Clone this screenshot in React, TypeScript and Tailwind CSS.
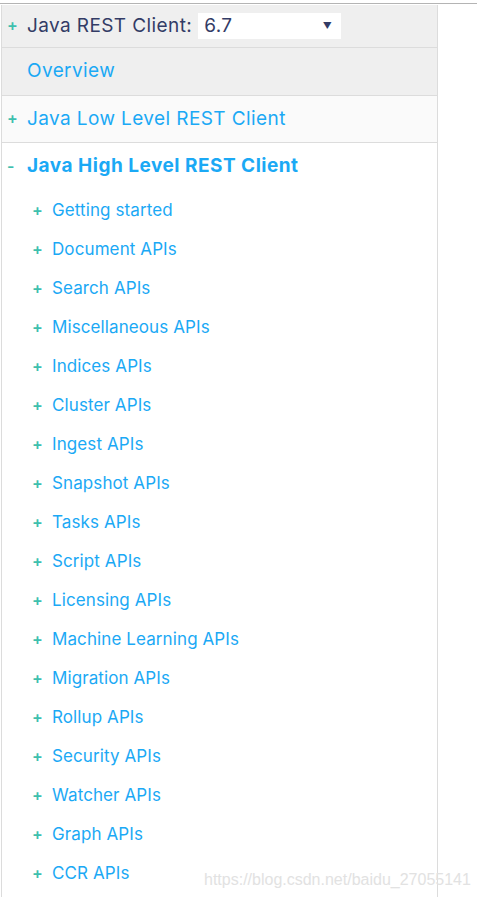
const sections = [
  'Getting started',
  'Document APIs',
  'Search APIs',
  'Miscellaneous APIs',
  'Indices APIs',
  'Cluster APIs',
  'Ingest APIs',
  'Snapshot APIs',
  'Tasks APIs',
  'Script APIs',
  'Licensing APIs',
  'Machine Learning APIs',
  'Migration APIs',
  'Rollup APIs',
  'Security APIs',
  'Watcher APIs',
  'Graph APIs',
  'CCR APIs',
];

function Toggle({ open = false }: { open?: boolean }) {
  return (
    <span className="w-[20px] shrink-0 -translate-y-px text-[16px] font-semibold leading-none text-[#3ebfae]">
      {open ? '-' : '+'}
    </span>
  );
}

export default function App() {
  return (
    <div
      className="relative min-h-screen bg-white"
      style={{ fontFamily: 'Inter, "Noto Sans", sans-serif' }}
    >
      <div className="h-[3px]" />
      <div className="h-px bg-[#b4b4b4]" />
      <div className="h-px" />

      <nav className="ml-px w-[437px] min-h-[892px] border-x border-[#dcdcdc]">
        {/* version picker */}
        <div className="flex h-[43px] items-center border-b border-[#dcdcdc] bg-[#efefef] pl-[5px]">
          <Toggle />
          <span className="text-[19px] tracking-[0.4px] text-[#333c66]">Java REST Client:</span>
          <div className="ml-[6px] flex h-[26px] w-[143px] items-center justify-between bg-white pl-[6px] pr-[9px] text-[19px] tracking-[0.4px] text-[#333c66]">
            <span>6.7</span>
            <span className="text-[9px] text-[#333c66]">▼</span>
          </div>
        </div>

        <div className="flex h-[48px] items-center border-b border-[#dcdcdc] bg-[#efefef] pl-[25px]">
          <span className="text-[19px] tracking-[0.4px] text-[#1ba9f5]">Overview</span>
        </div>

        <div className="flex h-[47px] items-center border-b border-[#dcdcdc] bg-[#fafafa] pl-[5px]">
          <Toggle />
          <span className="text-[19px] tracking-[0.4px] text-[#1ba9f5]">Java Low Level REST Client</span>
        </div>

        <div className="flex h-[47px] items-center pl-[5px]">
          <Toggle open />
          <span className="text-[19px] font-bold tracking-[0.5px] text-[#1ba9f5]">
            Java High Level REST Client
          </span>
        </div>

        <ul className="pt-px">
          {sections.map((name) => (
            <li key={name} className="flex h-[39px] items-center pl-[30px]">
              <Toggle />
              <span className="text-[17px] tracking-[0.1px] text-[#1ba9f5]">{name}</span>
            </li>
          ))}
        </ul>
      </nav>

      <span
        className="pointer-events-none absolute left-[204px] top-[868px] text-[16px] text-[#e2e2e2]"
        style={{ fontFamily: '"Liberation Sans", Arial, sans-serif' }}
      >
        https://blog.csdn.net/baidu_27055141
      </span>
    </div>
  );
}
